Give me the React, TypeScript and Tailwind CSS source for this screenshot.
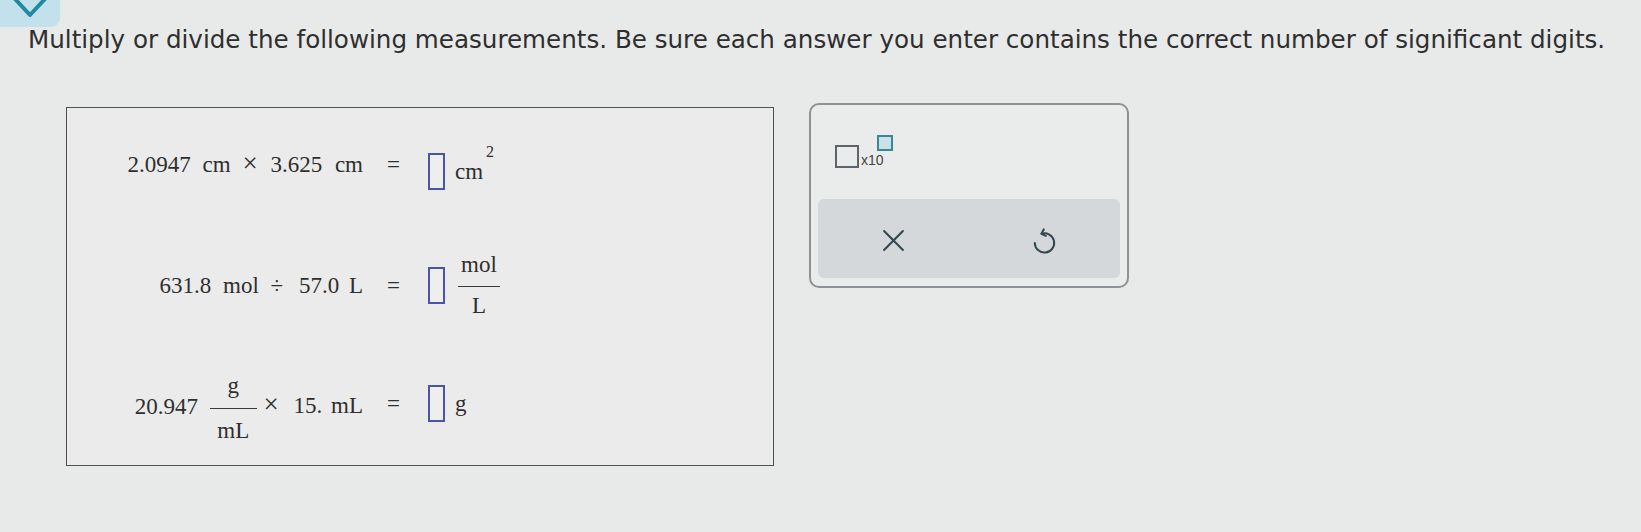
import React from 'react';

const serif = "font-['Liberation_Serif','Times_New_Roman',serif]";

// little blue answer slot
const AnswerBox = () => (
  <span className="block w-[17px] h-[37px] border-2 border-[#4b55a8] bg-[#eeeeee] shrink-0" />
);

const Fraction = ({ top, bottom, width, gapTop, gapBottom }: { top: string; bottom: string; width: string; gapTop: string; gapBottom: string }) => (
  <span className={`inline-flex flex-col items-center align-middle ${width}`}>
    <span className={`leading-[23px] ${gapTop}`}>{top}</span>
    <span className="block w-full h-[1.5px] bg-[#3a3a3a]" />
    <span className={`leading-[23px] ${gapBottom}`}>{bottom}</span>
  </span>
);

const UndoIcon = () => (
  <svg width="29" height="29" viewBox="0 0 24 24" fill="none" stroke="#33494f" strokeWidth="1.7" strokeLinecap="round" strokeLinejoin="round">
    <path d="M9.53 6.39 A8 8 0 1 1 4 14" />
    <path d="M11.35 2.83 L9.53 6.39 L13.1 8.2" />
  </svg>
);

const CloseIcon = () => (
  <svg width="23" height="23" viewBox="0 0 22 22" fill="none" stroke="#33494f" strokeWidth="2" strokeLinecap="round">
    <path d="M2 2 L20 20" />
    <path d="M20 2 L2 20" />
  </svg>
);

export default function App() {
  return (
    <div className="min-h-[532px] w-full bg-[#e8e9e9] text-[#333]">
      {/* collapse tab */}
      <div className="w-[60px] h-[27px] rounded-br-[9px] bg-[#c3e1ea] flex justify-center">
        <svg width="38" height="20" viewBox="0 0 38 20" fill="none" stroke="#1e8aa3" strokeWidth="4" strokeLinecap="round" strokeLinejoin="round">
          <path d="M4 -1 L19 15 L34 -1" />
        </svg>
      </div>

      <p className="pl-[28px] -mt-[2px] text-[24.6px] leading-[30px] text-[#2f2f2f] font-['DejaVu_Sans','Verdana',sans-serif] whitespace-nowrap">
        Multiply or divide the following measurements. Be sure each answer you enter contains the correct number of significant digits.
      </p>

      <div className="flex items-start pl-[66px] mt-[48px]">
        {/* equations */}
        <div className={`mt-[4px] w-[708px] h-[359px] border-[1.5px] border-[#505050] bg-[#ebebeb] text-[23px] text-[#2f2f2f] ${serif}`}>
          <div className="flex flex-col pt-[28px]">
            {/* row 1 */}
            <div className="flex items-center h-[70px]">
              <div className="w-[296px] text-right leading-[23px] whitespace-nowrap mb-[14px] shrink-0">
                <span>2.0947</span> <span className="ml-[6px]">cm</span> <span className="ml-[6px] text-[27px]">×</span> <span className="ml-[7px]">3.625</span> <span className="ml-[7px]">cm</span>
              </div>
              <span className="ml-[24px] leading-[23px] mb-[14px]">=</span>
              <div className="flex items-center ml-[28px]">
                <AnswerBox />
                <div className="flex items-start pb-[15px] ml-[10px]">
                  <span className="leading-[23px] mt-[16px]">cm</span>
                  <span className="text-[16px] leading-[16px] ml-[3px]">2</span>
                </div>
              </div>
            </div>

            {/* row 2 */}
            <div className="flex items-center h-[70px] mt-[44px]">
              <div className="w-[296px] text-right leading-[23px] whitespace-nowrap shrink-0">
                <span>631.8</span> <span className="ml-[6px]">mol</span> <span className="ml-[6px]">÷</span> <span className="ml-[10px]">57.0</span> <span className="ml-[4px]">L</span>
              </div>
              <span className="ml-[24px] leading-[23px]">=</span>
              <div className="flex items-center ml-[28px]">
                <AnswerBox />
                <span className="ml-[13px] flex">
                  <Fraction top="mol" bottom="L" width="w-[42px]" gapTop="pb-[10px]" gapBottom="pt-[7px]" />
                </span>
              </div>
            </div>

            {/* row 3 */}
            <div className="flex items-center h-[70px] mt-[48px]">
              <div className="w-[296px] text-right leading-[23px] whitespace-nowrap mt-[10px] shrink-0">
                <span>20.947</span> <span className="ml-[6px]"><Fraction top="g" bottom="mL" width="w-[47px]" gapTop="pb-[11px]" gapBottom="pt-[10px]" /></span> <span className="ml-[1px] text-[27px]">×</span> <span className="ml-[9px]">15.</span> <span className="ml-[3px]">mL</span>
              </div>
              <span className="ml-[24px] leading-[23px]">=</span>
              <div className="flex items-center ml-[28px]">
                <AnswerBox />
                <span className="ml-[10px] leading-[23px]">g</span>
              </div>
            </div>
          </div>
        </div>

        {/* tools panel */}
        <div className="ml-[35px] w-[320px] h-[185px] rounded-[10px] border-2 border-[#8d9296] bg-[#eaebeb]">
          <div className="flex items-end pl-[24px] pt-[30px]">
            <span className="block w-[24px] h-[23px] border-2 border-[#5f6469]" />
            <div className="flex flex-col ml-[2px] w-[32px]">
              <span className="self-end block w-[16px] h-[16px] border-2 border-[#3b8793] bg-[#c8e3e8]" />
              <span className="self-start mt-[1px] text-[14px] leading-[16px] text-[#444] font-['Liberation_Sans',Arial,sans-serif]">x10</span>
            </div>
          </div>
          <div className="mx-[7px] mt-[31px] h-[79px] pt-[4px] rounded-[6px] bg-[#d4d8da] grid grid-cols-2">
            <div className="flex items-center justify-center">
              <CloseIcon />
            </div>
            <div className="flex items-center justify-center">
              <UndoIcon />
            </div>
          </div>
        </div>
      </div>
    </div>
  );
}
